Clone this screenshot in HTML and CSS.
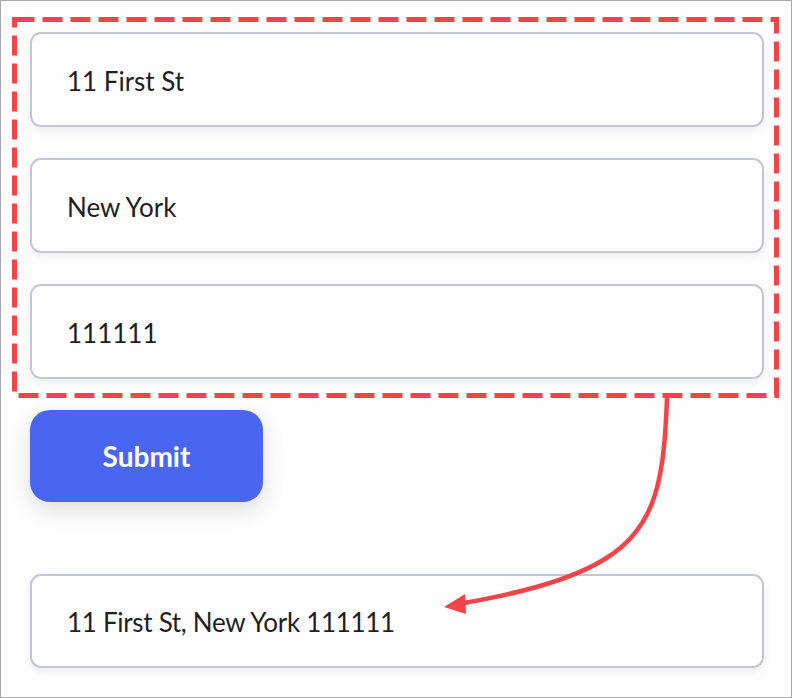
FILE: index.html
```html
<!DOCTYPE html>
<html lang="en">
<head>
    <meta charset="UTF-8">
    <meta name="viewport" content="width=device-width, initial-scale=1.0">
    <title>Address form</title>
    <link rel="stylesheet" href="styles.css">
</head>
<body>
    <div class="page">
        <form id="addressForm" class="fields">
            <input type="text" class="field" value="11 First St">
            <input type="text" class="field" value="New York">
            <input type="text" class="field" value="111111">
        </form>
        <button type="submit" form="addressForm" class="submit">Submit</button>
        <div class="result">11 First St, New York 111111</div>

        <svg class="annotation" width="792" height="698" viewBox="0 0 792 698">
            <rect x="14.5" y="19.5" width="762" height="376" fill="none" stroke="#f54447" stroke-width="5" stroke-dasharray="20 8"/>
            <path d="M667 398 C 664 475, 658 525, 608 557 C 570 582, 510 595, 458 604" fill="none" stroke="#f54447" stroke-width="4.5" stroke-linecap="round"/>
            <path d="M444 607 L 465 594 L 466 614 Z" fill="#f54447"/>
        </svg>
    </div>
</body>
</html>
```

FILE: styles.css
```css
body {
    margin: 0;
    background: #fdfdfd;
    font-family: Lato, "Open Sans", sans-serif;
}
.page {
    position: relative;
    width: 792px;
    height: 698px;
    box-sizing: border-box;
    border: 1px solid #a9a9a9;
    padding: 31px 27px 0 29px;
    background: #fdfdfd;
}
.fields {
    display: flex;
    flex-direction: column;
    gap: 31px;
    margin: 0;
}
.field, .result {
    box-sizing: border-box;
    width: 100%;
    height: 95px;
    padding: 2px 35px 0;
    border: 2px solid #c4c6d6;
    border-radius: 11px;
    background: #fefefe;
    box-shadow: 0 4px 10px rgba(0, 0, 0, 0.06);
    font-family: Lato, sans-serif;
    font-size: 26px;
    color: #1f1f1f;
    outline: none;
}
.submit {
    display: block;
    margin-top: 31px;
    width: 233px;
    height: 92px;
    border: none;
    border-radius: 20px;
    background: #4a66f0;
    color: #fff;
    font-family: Lato, sans-serif;
    font-weight: bold;
    font-size: 28px;
    box-shadow: 0 8px 22px rgba(0, 0, 0, 0.12);
    cursor: pointer;
}
.result {
    display: flex;
    align-items: center;
    margin-top: 72px;
    height: 94px;
    letter-spacing: -0.3px;
}
.annotation {
    position: absolute;
    left: -1px;
    top: -1px;
    pointer-events: none;
}
```
